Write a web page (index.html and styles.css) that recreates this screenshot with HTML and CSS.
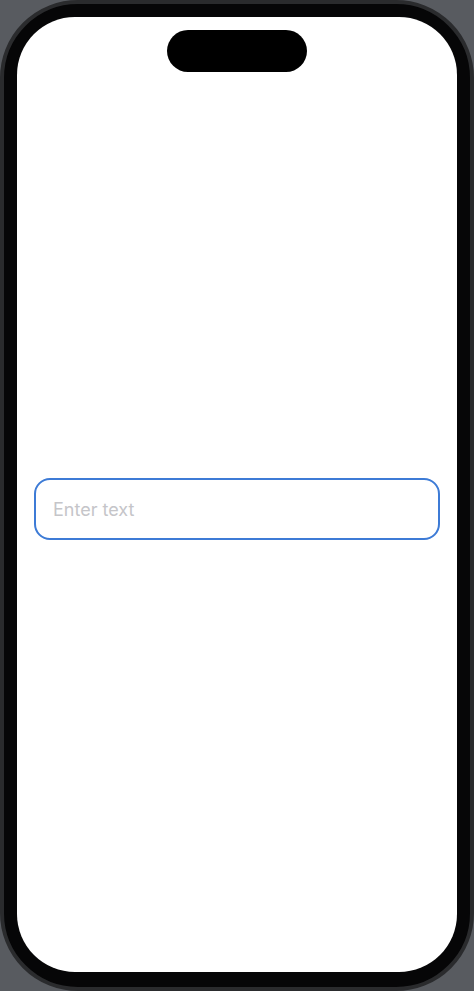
FILE: index.html
```html
<!DOCTYPE html>
<html>
<head>
<meta charset="utf-8">
<link rel="stylesheet" href="styles.css">
</head>
<body>
<div class="phone">
  <div class="screen">
    <div class="island"></div>
    <input class="field" type="text" placeholder="Enter text">
  </div>
</div>
</body>
</html>
```
FILE: styles.css
```css
html, body {
  margin: 0;
  padding: 0;
  background: #585b60;
}
.phone {
  box-sizing: border-box;
  width: 474px;
  height: 991px;
  border-radius: 78px;
  background: #060607;
  border: 4px solid #2a2b2d;
  padding: 13px 13px 15px 13px;
}
.screen {
  box-sizing: border-box;
  width: 440px;
  height: 955px;
  background: #fff;
  border-radius: 58px;
  display: flex;
  flex-direction: column;
  align-items: center;
  padding-top: 13px;
}
.island {
  width: 140px;
  height: 42px;
  border-radius: 21px;
  background: #000;
  flex-shrink: 0;
}
.field {
  box-sizing: border-box;
  margin-top: 406px;
  width: 406px;
  height: 62px;
  border: 2px solid #3d7bd6;
  border-radius: 16px;
  padding: 0 17px;
  font-family: Inter, "Noto Sans", sans-serif;
  font-size: 18px;
  color: #111;
  background: #fff;
  outline: none;
}
.field::placeholder {
  color: #c5c5c9;
}
```
